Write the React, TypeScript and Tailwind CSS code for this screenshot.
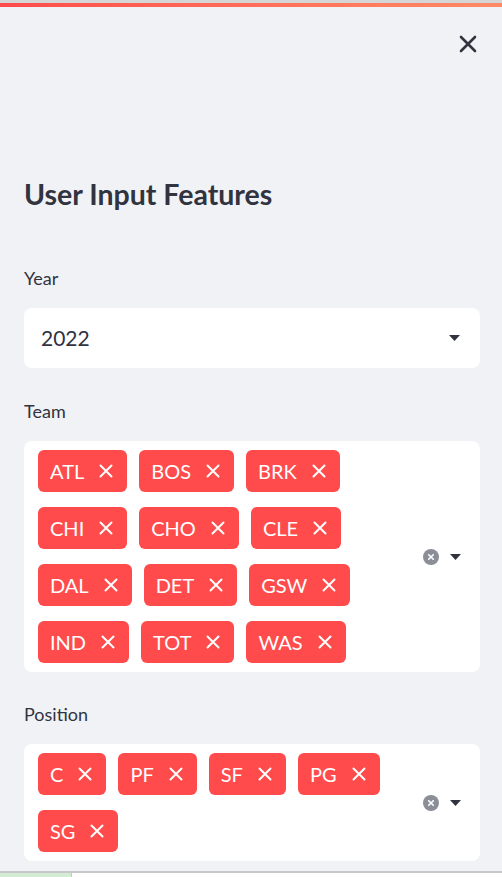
import React from "react";

const FONT = { fontFamily: "Lato, 'Noto Sans', sans-serif" };

const TEAMS = ["ATL", "BOS", "BRK", "CHI", "CHO", "CLE", "DAL", "DET", "GSW", "IND", "TOT", "WAS"];
const POSITIONS = ["C", "PF", "SF", "PG", "SG"];

function CloseIcon({ size, stroke, className }: { size: number; stroke: number; className?: string }) {
  return (
    <svg width={size} height={size} viewBox="0 0 18 18" className={className}>
      <path d="M2 2 L16 16 M16 2 L2 16" stroke="currentColor" strokeWidth={stroke} strokeLinecap="round" fill="none" />
    </svg>
  );
}

function Caret() {
  return (
    <svg width="11" height="6" viewBox="0 0 11 6" className="text-[#31333f]">
      <path d="M0 0 L11 0 L5.5 6 Z" fill="currentColor" />
    </svg>
  );
}

function Tag({ label }: { label: string }) {
  return (
    <div className="h-[42px] rounded-[6px] bg-[#ff4b4b] pl-[12px] pr-[14px] flex items-center gap-[15px] text-white text-[20px] leading-none">
      <span>{label}</span>
      <svg width="14" height="14" viewBox="0 0 14 14">
        <path d="M1.5 1.5 L12.5 12.5 M12.5 1.5 L1.5 12.5" stroke="white" strokeWidth="2" strokeLinecap="round" fill="none" />
      </svg>
    </div>
  );
}

function MultiSelect({ items }: { items: string[] }) {
  return (
    <div className="bg-white rounded-[8px] flex items-center">
      <div className="flex-1 min-w-0 flex flex-wrap gap-x-[12px] gap-y-[15px] pl-[14px] pr-[8px] py-[9px]">
        {items.map((t) => (
          <Tag key={t} label={t} />
        ))}
      </div>
      <div className="flex items-center gap-[11px] pr-[19px]">
        <div className="w-[16px] h-[16px] rounded-full bg-[#8b8d97] flex items-center justify-center">
          <svg width="6" height="6" viewBox="0 0 6 6">
            <path d="M0.7 0.7 L5.3 5.3 M5.3 0.7 L0.7 5.3" stroke="white" strokeWidth="1.6" strokeLinecap="round" />
          </svg>
        </div>
        <Caret />
      </div>
    </div>
  );
}

function Label({ children }: { children: React.ReactNode }) {
  return <div className="text-[18px] leading-[24px] text-[#31333f] mb-[18px]">{children}</div>;
}

export default function App() {
  return (
    <div className="min-h-screen bg-[#f0f2f6] text-[#31333f]" style={FONT}>
      <div className="h-[3px] bg-[#d6d6d6]" />
      <div className="h-[4px] bg-gradient-to-r from-[#ff4b4b] to-[#ff8a66]" />

      <div className="flex justify-end pt-[28px] pr-[25px]">
        <CloseIcon size={18} stroke={2.6} className="text-[#31333f]" />
      </div>

      <div className="pl-[24px] pr-[22px]">
        <h2 className="mt-[123px] text-[28.5px] leading-[36px] font-bold">User Input Features</h2>

        <div className="mt-[54px]">
          <Label>Year</Label>
          <div className="h-[60px] bg-white rounded-[8px] flex items-center justify-between pl-[17px] pr-[20px]">
            <span className="text-[21px]">2022</span>
            <Caret />
          </div>
        </div>

        <div className="mt-[31px]">
          <Label>Team</Label>
          <MultiSelect items={TEAMS} />
        </div>

        <div className="mt-[30px]">
          <Label>Position</Label>
          <MultiSelect items={POSITIONS} />
        </div>
      </div>

      <div className="mt-[10px] border-t-[2px] border-[#c8c8c8] flex h-[6px]">
        <div className="w-[72px] bg-[#d4ebd3] border-r-[1px] border-[#c8c8c8]" />
        <div className="flex-1 bg-white" />
      </div>
    </div>
  );
}
